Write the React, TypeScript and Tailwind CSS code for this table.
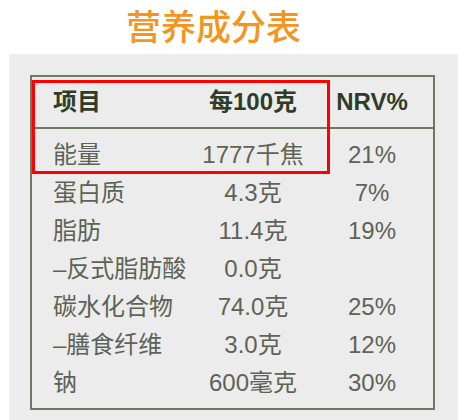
const rows: [string, string, string][] = [
  ["能量", "1777千焦", "21%"],
  ["蛋白质", "4.3克", "7%"],
  ["脂肪", "11.4克", "19%"],
  ["–反式脂肪酸", "0.0克", ""],
  ["碳水化合物", "74.0克", "25%"],
  ["–膳食纤维", "3.0克", "12%"],
  ["钠", "600毫克", "30%"],
];

export default function App() {
  return (
    <div
      className="h-[420px] w-[474px] overflow-hidden bg-white"
      style={{ fontFamily: '"Liberation Sans", "Noto Sans CJK SC", sans-serif' }}
    >
      <div className="flex h-[54px] items-center pl-[126px]">
        <h1 className="text-[35px] font-medium leading-none text-[#f39521]">
          营养成分表
        </h1>
      </div>
      <div className="ml-[9px] h-[366px] w-[449px] bg-[#ececec] pl-[21px] pt-[21px]">
        <div className="relative w-[405px] border-2 border-[#6b7a62]">
          <div className="grid h-[52px] grid-cols-[158px_126px_112px] items-center border-b-2 border-[#6b7a62] text-[24px] font-bold text-[#2f3d28]">
            <div className="pl-[21px]">项目</div>
            <div className="text-center">每100克</div>
            <div className="text-center">NRV%</div>
          </div>
          <div className="pb-[6px] pt-[7px]">
            {rows.map(([name, value, nrv]) => (
              <div
                key={name}
                className="grid h-[38px] grid-cols-[158px_126px_112px] items-center text-[24px] text-[#5d6356]"
              >
                <div className="whitespace-nowrap pl-[21px]">{name}</div>
                <div className="text-center">{value}</div>
                <div className="text-center">{nrv}</div>
              </div>
            ))}
          </div>
          <div className="absolute left-0 top-[3px] h-[94px] w-[298px] border-[3px] border-[#ff0000]" />
        </div>
      </div>
    </div>
  );
}
